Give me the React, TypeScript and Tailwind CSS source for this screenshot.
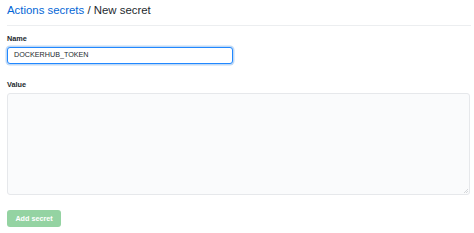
import React from "react";

export default function App() {
  return (
    <div
      className="w-[474px] h-[233px] bg-white pl-[7px] pr-[3px] pt-[2px] flex flex-col"
      style={{ fontFamily: '"Liberation Sans", Arial, sans-serif' }}
    >
      <h2 className="text-[11.4px] leading-[17px] font-normal pb-[6px] border-b border-[#eceef0] text-[#24292e]">
        <span className="text-[#0366d6]">Actions secrets</span> / New secret
      </h2>

      <label className="mt-[8px] text-[7.3px] leading-[10px] font-bold text-[#24292e]">Name</label>
      <div className="mt-[3px] w-[226px] h-[17px] rounded-[3px] border border-[#2188ff] shadow-[0_0_0_1.5px_rgba(3,102,214,0.25)] bg-white flex items-center pl-[6px] text-[7.2px] text-[#24292e]">
        DOCKERHUB_TOKEN
      </div>

      <label className="mt-[16px] text-[7.3px] leading-[10px] font-bold text-[#24292e]">Value</label>
      <div className="relative mt-[3px] w-[463px] h-[102px]">
        <textarea
          className="block w-full h-full rounded-[3px] border border-[#e6e8eb] bg-[#fafbfc] outline-none resize-none"
          defaultValue=""
        />
        <svg className="absolute right-[2px] bottom-[2px]" width="5" height="5" viewBox="0 0 5 5">
          <path d="M1 5 L5 1 M3 5 L5 3" stroke="#c4c7cb" strokeWidth="0.7" />
        </svg>
      </div>

      <div className="mt-[15px] flex">
        <button className="w-[54px] h-[17px] rounded-[3px] bg-[#94d3a2] text-white text-[7.2px] font-bold leading-none flex items-center justify-center">
          Add secret
        </button>
      </div>
    </div>
  );
}
